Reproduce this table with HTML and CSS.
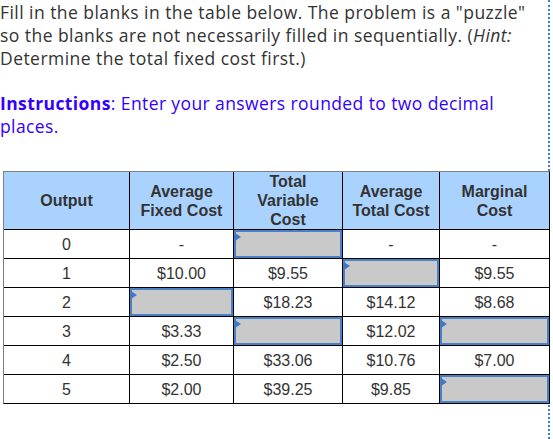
FILE: index.html
```html
<!DOCTYPE html>
<html lang="en">
<head>
<meta charset="utf-8">
<title>Cost table puzzle</title>
<link rel="stylesheet" href="styles.css">
</head>
<body>
<div class="page">
  <p class="intro">Fill in the blanks in the table below. The problem is a "puzzle"<br>so the blanks are not necessarily filled in sequentially. (<em>Hint:</em><br>Determine the total fixed cost first.)</p>
  <p class="instr"><strong>Instructions</strong>: Enter your answers rounded to two decimal<br>places.</p>

  <div class="grid" role="table">
    <div class="h" role="columnheader">Output</div>
    <div class="h" role="columnheader">Average Fixed Cost</div>
    <div class="h" role="columnheader">Total Variable Cost</div>
    <div class="h" role="columnheader">Average Total Cost</div>
    <div class="h" role="columnheader">Marginal Cost</div>

    <div class="c">0</div>
    <div class="c">-</div>
    <div class="c in"><span class="blank"></span></div>
    <div class="c">-</div>
    <div class="c">-</div>

    <div class="c">1</div>
    <div class="c">$10.00</div>
    <div class="c">$9.55</div>
    <div class="c in"><span class="blank"></span></div>
    <div class="c">$9.55</div>

    <div class="c">2</div>
    <div class="c in"><span class="blank"></span></div>
    <div class="c">$18.23</div>
    <div class="c">$14.12</div>
    <div class="c">$8.68</div>

    <div class="c">3</div>
    <div class="c">$3.33</div>
    <div class="c in"><span class="blank"></span></div>
    <div class="c">$12.02</div>
    <div class="c in"><span class="blank"></span></div>

    <div class="c">4</div>
    <div class="c">$2.50</div>
    <div class="c">$33.06</div>
    <div class="c">$10.76</div>
    <div class="c">$7.00</div>

    <div class="c">5</div>
    <div class="c">$2.00</div>
    <div class="c">$39.25</div>
    <div class="c">$9.85</div>
    <div class="c in"><span class="blank"></span></div>
  </div>
</div>
</body>
</html>
```
FILE: styles.css
```css
html, body {
  margin: 0;
  padding: 0;
  background: #fff;
}
.page {
  width: 550px;
  height: 439px;
  border-right: 2px dotted #3f7ccc;
  box-sizing: border-box;
  padding-top: 1px;
}
.intro, .instr {
  margin: 0;
  font-family: "Open Sans", Lato, sans-serif;
  font-size: 17.5px;
  letter-spacing: 0.45px;
  line-height: 23px;
  color: #333;
  white-space: nowrap;
  font-variant-ligatures: none;
}
.intro {
  margin-bottom: 22px;
}
.instr {
  color: #3300ff;
  letter-spacing: 0.4px;
}
.instr strong {
  font-weight: 700;
}
.grid {
  margin: 33px 0 0 3px;
  display: grid;
  grid-template-columns: 125px 103px 108px 96px 109px;
  grid-template-rows: 57px repeat(6, 28px);
  gap: 1px;
  width: max-content;
  background: #000;
  border: 1px solid #000;
  border-left-color: #808080;
  border-top-color: #808080;
  font-family: "Liberation Sans", Arial, sans-serif;
  font-size: 16px;
  color: #333;
}
.h {
  background: #aad2ff;
  font-weight: 700;
  display: flex;
  align-items: center;
  justify-content: center;
  text-align: center;
  padding: 0 5px;
  line-height: 19px;
}
.c {
  background: #fff;
  display: flex;
  align-items: center;
  justify-content: center;
  padding-top: 1px;
}
.c.in {
  align-items: stretch;
  justify-content: stretch;
  padding-top: 0;
}
.blank {
  flex: 1;
  position: relative;
  background: #c9c9c9;
  border: 2px solid #4a80c6;
}
.blank::before {
  content: "";
  position: absolute;
  left: -1px;
  top: 1px;
  border-top: 4px solid transparent;
  border-bottom: 4px solid transparent;
  border-left: 6px solid #3f78c8;
}
```
